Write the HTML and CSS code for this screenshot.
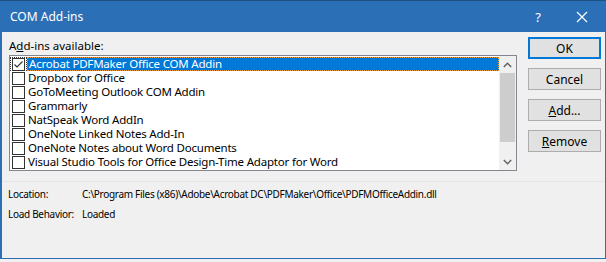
FILE: index.html
```html
<!DOCTYPE html>
<html lang="en">
<head>
  <meta charset="UTF-8">
  <meta name="viewport" content="width=device-width, initial-scale=1.0">
  <title>COM Add-ins</title>
  <link rel="stylesheet" href="styles.css">
</head>
<body>

<div class="window">
  <div class="titlebar">
    <span class="title">COM Add-ins</span>
    <span class="title-btn help">?</span>
    <span class="title-btn close">
      <svg width="12" height="12" viewBox="0 0 12 12"><path d="M1 1 L11 11 M11 1 L1 11" stroke="#fff" stroke-width="1.2" fill="none"/></svg>
    </span>
  </div>

  <div class="content">
    <div class="list-col">
      <div class="list-label">A<u>d</u>d-ins available:</div>
      <div class="listbox">
        <div class="items" id="items"></div>
        <div class="scrollbar">
          <div class="arrow">
            <svg width="9" height="6" viewBox="0 0 9 6"><path d="M0.8 5 L4.5 1.3 L8.2 5" stroke="#606060" stroke-width="1.4" fill="none"/></svg>
          </div>
          <div class="track"><div class="thumb"></div></div>
          <div class="arrow">
            <svg width="9" height="6" viewBox="0 0 9 6"><path d="M0.8 1 L4.5 4.7 L8.2 1" stroke="#606060" stroke-width="1.4" fill="none"/></svg>
          </div>
        </div>
      </div>
    </div>

    <div class="buttons">
      <button class="btn default">OK</button>
      <button class="btn">Cancel</button>
      <button class="btn"><u>A</u>dd...</button>
      <button class="btn"><u>R</u>emove</button>
    </div>
  </div>

  <div class="details">
    <div class="detail-row">
      <span class="detail-label">Location:</span>
      <span class="detail-value">C:\Program Files (x86)\Adobe\Acrobat DC\PDFMaker\Office\PDFMOfficeAddin.dll</span>
    </div>
    <div class="detail-row">
      <span class="detail-label">Load Behavior:</span>
      <span class="detail-value">Loaded</span>
    </div>
  </div>
</div>

<script>
let addins = [
  { name: "Acrobat PDFMaker Office COM Addin", checked: true, selected: true },
  { name: "Dropbox for Office" },
  { name: "GoToMeeting Outlook COM Addin" },
  { name: "Grammarly" },
  { name: "NatSpeak Word AddIn" },
  { name: "OneNote Linked Notes Add-In" },
  { name: "OneNote Notes about Word Documents" },
  { name: "Visual Studio Tools for Office Design-Time Adaptor for Word" }
];

let check = '<svg width="11" height="11" viewBox="0 0 11 11"><path d="M1.5 5.5 L4 8 L9.5 2.5" stroke="#333" stroke-width="1.2" fill="none"/></svg>';

let list = document.getElementById("items");
addins.forEach(({ name, checked, selected }) => {
  let row = document.createElement("div");
  row.classList.add("item");
  if (selected) row.classList.add("selected");
  row.innerHTML = `<span class="box-wrap"><span class="checkbox">${checked ? check : ""}</span></span><span class="item-text">${name}</span>`;
  list.appendChild(row);
});
</script>

</body>
</html>
```

FILE: styles.css
```css
body {
  margin: 0;
  padding: 0;
  background: #f0f0f0;
  font-family: "Noto Sans", "Open Sans", sans-serif;
  font-size: 12px;
  color: #000;
}
.window {
  width: 606px;
  height: 259px;
  box-sizing: border-box;
  background: #f0f0f0;
  border: 1px solid #2b6fb5;
  border-top: none;
  border-left-width: 2px;
  display: flex;
  flex-direction: column;
}
.titlebar {
  height: 32px;
  margin: 0 -1px 0 -2px;
  background: #2b70b6;
  border-top: 1px solid #1d4f80;
  box-sizing: border-box;
  color: #fff;
  display: flex;
  align-items: center;
}
.title {
  flex: 1;
  padding-left: 10px;
  font-size: 12px;
}
.title-btn {
  width: 46px;
  display: flex;
  justify-content: center;
  align-items: center;
}
.help {
  font-size: 13px;
  margin-right: -2px;
}
.close {
  margin-right: 1px;
}
.content {
  display: flex;
  padding: 5px 4px 0 7px;
}
.list-col {
  width: 508px;
}
.list-label {
  height: 18px;
  line-height: 18px;
  font-size: 11.5px;
}
.listbox {
  height: 116px;
  box-sizing: border-box;
  border: 1px solid #828790;
  background: #fff;
  display: flex;
}
.items {
  flex: 1;
  padding-top: 1px;
  overflow: hidden;
}
.item {
  height: 14px;
  display: flex;
  align-items: center;
}
.box-wrap {
  width: 17px;
  height: 14px;
  display: flex;
  align-items: center;
  justify-content: center;
  box-sizing: border-box;
}
.checkbox {
  width: 13px;
  height: 13px;
  box-sizing: border-box;
  border: 1px solid #333;
  background: #fff;
  display: flex;
  align-items: center;
  justify-content: center;
}
.item-text {
  flex: 1;
  padding-left: 1px;
  height: 14px;
  line-height: 14px;
  box-sizing: border-box;
  white-space: nowrap;
  font-size: 11.5px;
  letter-spacing: -0.2px;
}
.selected .box-wrap {
  outline: 1px dotted #333;
  outline-offset: -1px;
}
.selected .item-text {
  background: #0078d7;
  color: #fff;
  border: 1px dotted #f29a38;
  line-height: 12px;
}
.scrollbar {
  width: 17px;
  background: #f0f0f0;
  display: flex;
  flex-direction: column;
}
.arrow {
  height: 17px;
  display: flex;
  align-items: center;
  justify-content: center;
}
.track {
  flex: 1;
  padding: 0 1px;
}
.thumb {
  height: 69px;
  background: #cdcdcd;
}
.buttons {
  display: flex;
  flex-direction: column;
  gap: 9px;
  margin-left: 11px;
}
.btn {
  width: 73px;
  height: 22px;
  background: #e1e1e1;
  border: 1px solid #adadad;
  font-family: "Noto Sans", "Open Sans", sans-serif;
  font-size: 12px;
  color: #000;
  padding: 0;
}
.btn.default {
  border: 2px solid #0078d7;
}
.details {
  margin-top: 10px;
  border-top: 1px solid #e4e4e4;
  padding: 2px 0 0 6px;
}
.detail-row {
  display: flex;
  height: 20px;
  line-height: 20px;
  font-size: 10px;
  letter-spacing: -0.3px;
  white-space: nowrap;
}
.detail-label {
  width: 74px;
}
```
